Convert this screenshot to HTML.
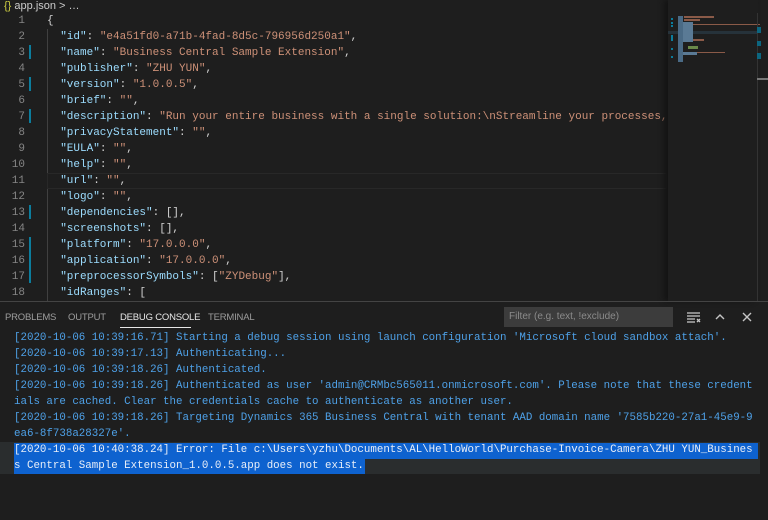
<!DOCTYPE html>
<html><head><meta charset="utf-8"><style>
*{margin:0;padding:0;box-sizing:border-box}
body{width:768px;height:520px;background:#1e1e1e;overflow:hidden;position:relative;font-family:"Liberation Sans",sans-serif}
.crumb{position:absolute;left:0;top:0;height:13px;width:768px;font-size:11px;color:#cccccc;line-height:12px}
.crumb b{color:#cbcb41;font-weight:normal;margin-left:4px}
.mono{font-family:"Liberation Mono",monospace;white-space:pre}
.ln{position:absolute;left:0;width:25px;text-align:right;font-size:11px;color:#858585;font-family:"Liberation Mono",monospace;line-height:16px}
.code{position:absolute;left:47px;font-size:11px;line-height:16px;color:#d4d4d4}
.k{color:#9cdcfe}.s{color:#ce9178}
.gut{position:absolute;left:29px;width:2px;height:14px;background:#0c7d9d}
.cur{position:absolute;left:47px;width:620px;top:173px;height:16px;border:1px solid #282828}
.guide{position:absolute;left:47px;top:29px;width:1px;height:272px;background:#404040}
.panelbd{position:absolute;left:0;top:301px;width:768px;height:1px;background:#444}
.tabs{position:absolute;top:312px;font-size:9.5px;color:#9d9d9d;letter-spacing:-.2px;white-space:nowrap}
.tab{position:absolute;top:0;white-space:nowrap}
.console{position:absolute;left:14px;top:330px;font-size:10.8px;line-height:16px;color:#4ea1e8}
.filter{position:absolute;left:504px;top:307px;width:169px;height:20px;background:#3c3c3c;color:#8b8b8b;font-size:10px;line-height:20px;padding-left:5px}
</style></head><body>
<div class="crumb"><b>{}</b> app.json &gt; …</div>
<div class="guide"></div>
<div class="cur"></div>
<div class="gut" style="top:45px"></div><div class="gut" style="top:77px"></div><div class="gut" style="top:109px"></div>
<div class="gut" style="top:205px"></div><div class="gut" style="top:237px;height:46px"></div>
<div class="ln" style="top:13px">1<br>2<br>3<br>4<br>5<br>6<br>7<br>8<br>9<br>10<br>11<br>12<br>13<br>14<br>15<br>16<br>17<br>18</div>
<div class="code mono" style="top:13px">{
  <span class="k">"id"</span>: <span class="s">"e4a51fd0-a71b-4fad-8d5c-796956d250a1"</span>,
  <span class="k">"name"</span>: <span class="s">"Business Central Sample Extension"</span>,
  <span class="k">"publisher"</span>: <span class="s">"ZHU YUN"</span>,
  <span class="k">"version"</span>: <span class="s">"1.0.0.5"</span>,
  <span class="k">"brief"</span>: <span class="s">""</span>,
  <span class="k">"description"</span>: <span class="s">"Run your entire business with a single solution:\nStreamline your processes, \</span>
  <span class="k">"privacyStatement"</span>: <span class="s">""</span>,
  <span class="k">"EULA"</span>: <span class="s">""</span>,
  <span class="k">"help"</span>: <span class="s">""</span>,
  <span class="k">"url"</span>: <span class="s">""</span>,
  <span class="k">"logo"</span>: <span class="s">""</span>,
  <span class="k">"dependencies"</span>: [],
  <span class="k">"screenshots"</span>: [],
  <span class="k">"platform"</span>: <span class="s">"17.0.0.0"</span>,
  <span class="k">"application"</span>: <span class="s">"17.0.0.0"</span>,
  <span class="k">"preprocessorSymbols"</span>: [<span class="s">"ZYDebug"</span>],
  <span class="k">"idRanges"</span>: [</div>
<!-- minimap -->
<div style="position:absolute;left:668px;top:0;width:90px;height:301px;background:#1e1e1e;box-shadow:-4px 0 5px #141414"></div>
<div style="position:absolute;left:668px;top:31px;width:90px;height:3px;background:#26323a"></div>
<svg style="position:absolute;left:670px;top:14px" width="90" height="50">
<g fill="#4a6a85"><rect x="8" y="2" width="5" height="46"/></g>
<g fill="#8a5a48"><rect x="14" y="2" width="30" height="2"/><rect x="14" y="5" width="16" height="2"/><rect x="14" y="10" width="80" height="1"/><rect x="14" y="25" width="20" height="2"/><rect x="20" y="38" width="35" height="1"/></g>
<g fill="#5a7a95"><rect x="13" y="8" width="10" height="20"/><rect x="13" y="38" width="14" height="3"/></g>
<rect x="18" y="32" width="10" height="3" fill="#6a8a4a"/>
<g fill="#0c7d9d"><rect x="1" y="4" width="2" height="2"/><rect x="1" y="8" width="2" height="2"/><rect x="1" y="11" width="2" height="2"/><rect x="1" y="21" width="2" height="6"/><rect x="1" y="34" width="2" height="2"/><rect x="1" y="42" width="2" height="2"/></g>
</svg>
<div style="position:absolute;left:757px;top:13px;width:1px;height:288px;background:#333"></div>
<div style="position:absolute;left:757px;top:27px;width:4px;height:6px;background:#0c6680"></div>
<div style="position:absolute;left:757px;top:41px;width:4px;height:5px;background:#0c6680"></div>
<div style="position:absolute;left:757px;top:53px;width:4px;height:6px;background:#0c6680"></div>
<div style="position:absolute;left:757px;top:78px;width:11px;height:2px;background:#777"></div>
<div class="panelbd"></div>
<div class="tabs"><span class="tab" style="left:5px">PROBLEMS</span><span class="tab" style="left:68px">OUTPUT</span><span class="tab" style="left:120px;color:#e7e7e7">DEBUG CONSOLE</span><span class="tab" style="left:208px">TERMINAL</span></div>
<div style="position:absolute;left:120px;top:327px;width:71px;height:1px;background:#e7e7e7"></div>
<div class="filter">Filter (e.g. text, !exclude)</div>
<svg style="position:absolute;left:686px;top:310px" width="16" height="14"><g stroke="#c5c5c5" stroke-width="1.3"><line x1="1" y1="3" x2="14" y2="3"/><line x1="1" y1="6" x2="14" y2="6"/><line x1="1" y1="9" x2="9" y2="9"/><line x1="1" y1="12" x2="9" y2="12"/><line x1="11" y1="9" x2="14" y2="12"/><line x1="14" y1="9" x2="11" y2="12"/></g></svg>
<svg style="position:absolute;left:713px;top:310px" width="14" height="14"><path d="M3 9 L7 5 L11 9" stroke="#c5c5c5" stroke-width="1.4" fill="none"/></svg>
<svg style="position:absolute;left:740px;top:310px" width="14" height="14"><path d="M3 3 L11 11 M11 3 L3 11" stroke="#c5c5c5" stroke-width="1.4"/></svg>
<div style="position:absolute;left:0;top:442px;width:760px;height:32px;background:#2a2d2e"></div>
<div style="position:absolute;left:14px;top:443px;width:744px;height:16px;background:#0e62cf"></div>
<div style="position:absolute;left:14px;top:459px;width:351px;height:15px;background:#0e62cf"></div>
<div class="console mono">[2020-10-06 10:39:16.71] Starting a debug session using launch configuration 'Microsoft cloud sandbox attach'.
[2020-10-06 10:39:17.13] Authenticating...
[2020-10-06 10:39:18.26] Authenticated.
[2020-10-06 10:39:18.26] Authenticated as user 'admin@CRMbc565011.onmicrosoft.com'. Please note that these credent
ials are cached. Clear the credentials cache to authenticate as another user.
[2020-10-06 10:39:18.26] Targeting Dynamics 365 Business Central with tenant AAD domain name '7585b220-27a1-45e9-9
ea6-8f738a28327e'.
<span style="color:#e8eef8">[2020-10-06 10:40:38.24] Error: File c:\Users\yzhu\Documents\AL\HelloWorld\Purchase-Invoice-Camera\ZHU YUN_Busines
s Central Sample Extension_1.0.0.5.app does not exist.</span></div>
</body></html>
